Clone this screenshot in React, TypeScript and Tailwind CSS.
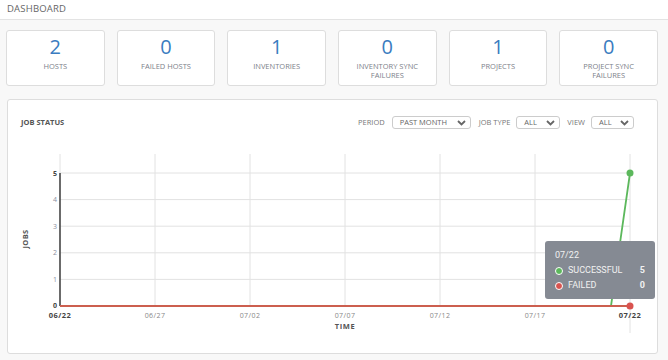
import React from "react";

const stats = [
  { value: "2", label: ["HOSTS"] },
  { value: "0", label: ["FAILED HOSTS"] },
  { value: "1", label: ["INVENTORIES"] },
  { value: "0", label: ["INVENTORY SYNC", "FAILURES"] },
  { value: "1", label: ["PROJECTS"] },
  { value: "0", label: ["PROJECT SYNC", "FAILURES"] },
];

const xTicks = ["06/22", "06/27", "07/02", "07/07", "07/12", "07/17", "07/22"];

function Chevron() {
  return (
    <svg width="9" height="6" viewBox="0 0 9 6" className="shrink-0">
      <path d="M1 1 L4.5 4.5 L8 1" fill="none" stroke="#666" strokeWidth="1.8" />
    </svg>
  );
}

function Select({ text, width }: { text: string; width: string }) {
  return (
    <div
      className={`${width} h-[13px] border border-[#ccc] rounded-[3px] bg-white flex items-center justify-between pl-[7px] pr-[4px] text-[7.5px] text-[#666]`}
    >
      <span>{text}</span>
      <Chevron />
    </div>
  );
}

function Chart() {
  const left = 60;
  const right = 630;
  const top = 174;
  const bottom = 307;
  const step = (bottom - top) / 5;
  const xs = xTicks.map((_, i) => left + i * 95);
  return (
    <svg width="649" height="222" viewBox="8 132 649 222" className="block">
      {/* vertical grid */}
      {xs.map((x) => (
        <line key={x} x1={x} y1={155} x2={x} y2={bottom} stroke="#e2e2e2" strokeWidth="1" />
      ))}
      <line x1={630} y1={307} x2={630} y2={334} stroke="#e2e2e2" strokeWidth="1" />
      {/* horizontal grid */}
      {[0, 1, 2, 3, 4, 5].map((i) => (
        <line
          key={i}
          x1={left}
          y1={bottom - i * step}
          x2={right}
          y2={bottom - i * step}
          stroke="#e2e2e2"
          strokeWidth="1"
        />
      ))}
      {/* y axis */}
      <line x1={left} y1={top} x2={left} y2={bottom} stroke="#222" strokeWidth="1.3" />
      {/* y labels */}
      {[0, 1, 2, 3, 4, 5].map((i) => (
        <text
          key={i}
          x={57}
          y={bottom - i * step + (i === 0 ? 1.5 : 2.5)}
          textAnchor="end"
          fontSize="7"
          fontWeight={i === 0 || i === 5 ? 700 : 400}
          fill={i === 0 || i === 5 ? "#444" : "#8a8fa0"}
        >
          {i}
        </text>
      ))}
      {/* x labels */}
      {xTicks.map((t, i) => {
        const edge = i === 0 || i === xTicks.length - 1;
        return (
          <text
            key={t}
            x={xs[i]}
            y={318.5}
            textAnchor="middle"
            fontSize={edge ? 7.5 : 7}
            fontWeight={edge ? 700 : 400}
            fill={edge ? "#444" : "#888"}
            letterSpacing="0.4"
          >
            {t}
          </text>
        );
      })}
      <text x={345} y={330} textAnchor="middle" fontSize="7.5" fontWeight="700" fill="#555" letterSpacing="0.6">
        TIME
      </text>
      <text
        x={0}
        y={0}
        transform="translate(28 240) rotate(-90)"
        textAnchor="middle"
        fontSize="7.5"
        fontWeight="700"
        fill="#555"
        letterSpacing="0.4"
      >
        JOBS
      </text>
      {/* series */}
      <polyline points={`${left},${bottom} 611,${bottom} ${right},${top}`} fill="none" stroke="#5cb85c" strokeWidth="1.8" />
      <line x1={left} y1={bottom} x2={right} y2={bottom} stroke="#cc5f4f" strokeWidth="2" />
      <circle cx={right} cy={top} r="3.5" fill="#5cb85c" />
      <circle cx={right} cy={bottom} r="3.5" fill="#d9534f" />
    </svg>
  );
}

export default function App() {
  return (
    <div className="w-[668px] h-[360px] bg-[#f8f8f8] overflow-hidden" style={{ fontFamily: "'Open Sans', sans-serif" }}>
      <div className="h-[20px] bg-white border-b border-[#e3e3e3] flex items-center pl-[7px]">
        <span className="text-[9.5px] text-[#666] tracking-[0.2px]">DASHBOARD</span>
      </div>

      <div className="grid grid-cols-6 gap-[12px] pl-[6px] pr-[10px] pt-[10px]">
        {stats.map((s, i) => (
          <div
            key={i}
            className="h-[56px] bg-white border border-[#dddddd] rounded-[3px] flex flex-col items-center pt-[3px]"
          >
            <div className="text-[20px] leading-[26px] text-[#3a7cc0]">{s.value}</div>
            <div className="mt-[2px] text-[7.5px] leading-[9px] text-[#7d818a] text-center">
              {s.label.map((l) => (
                <div key={l}>{l}</div>
              ))}
            </div>
          </div>
        ))}
      </div>

      <div className="relative mt-[13px] ml-[7px] w-[651px] h-[255px] bg-white border border-[#dddddd] rounded-[3px] pt-[15px]">
        <div className="h-[15px] flex items-center pl-[13px] pr-[23px]">
          <span className="text-[7.5px] font-bold text-[#555]">JOB STATUS</span>
          <div className="ml-auto flex items-center text-[7.5px] text-[#777]">
            <span className="mr-[7px]">PERIOD</span>
            <Select text="PAST MONTH" width="w-[79px]" />
            <span className="ml-[8px] mr-[6px]">JOB TYPE</span>
            <Select text="ALL" width="w-[44px]" />
            <span className="ml-[7px] mr-[6px]">VIEW</span>
            <Select text="ALL" width="w-[43px]" />
          </div>
        </div>
        <div className="h-[1px]" />
        <Chart />

        <div className="absolute left-[537px] top-[141px] w-[110px] h-[58px] bg-[#858a93] rounded-[3px] pl-[10px] pr-[10px] pt-[9px] text-[9px] text-[#f1f1f1]" style={{ fontFamily: "Roboto, sans-serif" }}>
          <div className="leading-[11px]">07/22</div>
          <div className="flex items-center mt-[4px] leading-[11px]">
            <span className="w-[8px] h-[8px] rounded-full bg-[#5cb85c] border border-white mr-[5px]" />
            <span>SUCCESSFUL</span>
            <span className="ml-auto font-bold">5</span>
          </div>
          <div className="flex items-center mt-[4px] leading-[11px]">
            <span className="w-[8px] h-[8px] rounded-full bg-[#d9534f] border border-white mr-[5px]" />
            <span>FAILED</span>
            <span className="ml-auto font-bold">0</span>
          </div>
        </div>
      </div>
    </div>
  );
}
